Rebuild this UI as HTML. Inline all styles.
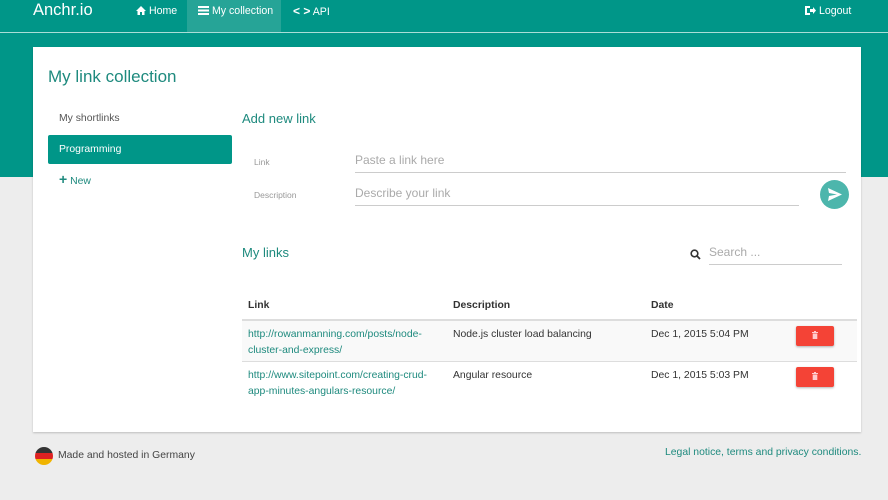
<!DOCTYPE html>
<html><head><style>
*{margin:0;padding:0;box-sizing:border-box}
body{width:888px;height:500px;background:#ededed;font-family:"Liberation Sans",sans-serif;position:relative;overflow:hidden;font-size:10.4px;color:#333}
.a{position:absolute}
.teal{background:#009688}
.nav{color:#fff;font-size:10.6px}
.t{color:#1e8a7e}
.lbl{color:#999;font-size:8.5px}
.ph{color:#aaa;font-size:12px}
.line{height:1px;background:#ccc}
.del{width:38px;height:20px;background:#f44336;border-radius:2px;box-shadow:0 1px 2px rgba(0,0,0,.3)}
</style></head><body>
<div class="a teal" style="left:0;top:0;width:888px;height:177px"></div>
<div class="a" style="left:0;top:32px;width:888px;height:1px;background:#a9ddd7"></div>
<div class="a" style="left:187px;top:0;width:94px;height:32px;background:#26a497"></div>
<div class="a nav" style="left:33px;top:1px;font-size:16.5px">Anchr.io</div>
<div class="a nav" style="left:136px;top:5px">
<svg width="10" height="9" viewBox="0 0 10 9" style="vertical-align:-1px"><path d="M5 0L0 5h1.5v4h2.5V6h2v3h2.5V5H10z" fill="#fff"/></svg> Home</div>
<div class="a nav" style="left:198px;top:5px">
<svg width="11" height="9" viewBox="0 0 11 9" style="vertical-align:-1px"><path d="M0 0h11v2H0zM0 3.5h11v2H0zM0 7h11v2H0z" fill="#fff"/></svg> My collection</div>
<div class="a nav" style="left:293px;top:4px"><b style="font-size:12px">&lt; &gt;</b> API</div>
<div class="a nav" style="left:805px;top:5px">
<svg width="11" height="9" viewBox="0 0 11 9" style="vertical-align:-1px"><path d="M0 0h5v2H2v5h3v2H0zM5 3h3V1l3 3.5L8 8V6H5z" fill="#fff"/></svg> Logout</div>

<div class="a" style="left:33px;top:47px;width:828px;height:385px;background:#fff;box-shadow:0 1px 2px rgba(0,0,0,.2)"></div>
<div class="a t" style="left:48px;top:67px;font-size:17px">My link collection</div>
<div class="a" style="left:59px;top:113px;color:#555">My shortlinks</div>
<div class="a" style="left:48px;top:135px;width:184px;height:29px;background:#009688;border-radius:2px"></div>
<div class="a" style="left:59px;top:144px;color:#fff">Programming</div>
<div class="a t" style="left:59px;top:174px"><b style="font-size:14px;line-height:11px">+</b> New</div>

<div class="a t" style="left:242px;top:111px;font-size:13px">Add new link</div>
<div class="a lbl" style="left:254px;top:157px">Link</div>
<div class="a ph" style="left:355px;top:153px">Paste a link here</div>
<div class="a line" style="left:355px;top:172px;width:491px"></div>
<div class="a lbl" style="left:254px;top:190px">Description</div>
<div class="a ph" style="left:355px;top:186px">Describe your link</div>
<div class="a line" style="left:355px;top:205px;width:444px"></div>
<div class="a" style="left:820px;top:180px;width:29px;height:29px;border-radius:50%;background:#4db6ac">
<svg width="29" height="29" viewBox="0 0 29 29"><path d="M8 8L22 14.5 8 21 9 16 17 14.5 9 13z" fill="#fff"/></svg></div>

<div class="a t" style="left:242px;top:245px;font-size:13px">My links</div>
<svg class="a" style="left:690px;top:249px" width="11" height="11" viewBox="0 0 11 11"><circle cx="4.5" cy="4.5" r="3.3" stroke="#333" stroke-width="1.6" fill="none"/><path d="M7 7l3 3" stroke="#333" stroke-width="1.8"/></svg>
<div class="a ph" style="left:709px;top:245px">Search ...</div>
<div class="a line" style="left:709px;top:264px;width:133px"></div>

<div class="a" style="left:248px;top:300px;font-weight:bold;color:#333">Link</div>
<div class="a" style="left:453px;top:300px;font-weight:bold;color:#333">Description</div>
<div class="a" style="left:651px;top:300px;font-weight:bold;color:#333">Date</div>
<div class="a" style="left:242px;top:319px;width:615px;height:2px;background:#ddd"></div>
<div class="a" style="left:242px;top:321px;width:615px;height:40px;background:#f9f9f9"></div>
<div class="a" style="left:242px;top:361px;width:615px;height:1px;background:#ddd"></div>
<div class="a t" style="left:248px;top:327px;line-height:16px">http://rowanmanning.com/posts/node-<br>cluster-and-express/</div>
<div class="a" style="left:453px;top:327px;line-height:16px">Node.js cluster load balancing</div>
<div class="a" style="left:651px;top:327px;line-height:16px">Dec 1, 2015 5:04 PM</div>
<div class="a del" style="left:796px;top:326px"></div>
<div class="a t" style="left:248px;top:368px;line-height:16px">http://www.sitepoint.com/creating-crud-<br>app-minutes-angulars-resource/</div>
<div class="a" style="left:453px;top:368px;line-height:16px">Angular resource</div>
<div class="a" style="left:651px;top:368px;line-height:16px">Dec 1, 2015 5:03 PM</div>
<div class="a del" style="left:796px;top:367px"></div>
<svg class="a" style="left:812px;top:331px" width="6" height="8" viewBox="0 0 6 8"><path d="M0 1h6v1H0zM2 0h2v1H2zM.7 2.5h4.6V8H.7z" fill="#fcc"/></svg>
<svg class="a" style="left:812px;top:372px" width="6" height="8" viewBox="0 0 6 8"><path d="M0 1h6v1H0zM2 0h2v1H2zM.7 2.5h4.6V8H.7z" fill="#fcc"/></svg>

<div class="a" style="left:35px;top:447px;width:18px;height:18px;border-radius:50%;background:linear-gradient(#333 0 33%,#d22 33% 66%,#f0b400 66%)"></div>
<div class="a" style="left:58px;top:450px;color:#444">Made and hosted in Germany</div>
<div class="a t" style="left:665px;top:447px">Legal notice, terms and privacy conditions.</div>
</body></html>
